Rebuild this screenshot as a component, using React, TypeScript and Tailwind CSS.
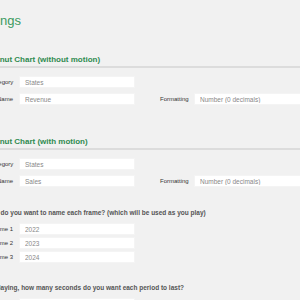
import React from "react";

const font = "font-['Liberation_Sans',Arial,sans-serif]";

function Field({ label, value, wide }: { label: string; value: string; wide?: boolean }) {
  return (
    <div className="flex items-center">
      <span className={`text-right text-[6px] text-[#333] ${wide ? "w-[28px]" : "w-[24px]"} shrink-0 whitespace-nowrap`}>
        {label}
      </span>
      <input
        readOnly
        value={value}
        className="ml-[6px] h-[12px] w-[116px] shrink-0 border border-[#f4f4f4] bg-white px-[5px] text-[6.5px] text-[#888] outline-none"
      />
    </div>
  );
}

function SectionHead({ children }: { children: React.ReactNode }) {
  return (
    <div className="border-b-2 border-[#dcdcdc] pb-[1px] text-[8px] font-bold leading-[10px] text-[#2f8a50] whitespace-nowrap">
      {children}
    </div>
  );
}

function ChartSection({ title, name }: { title: string; name: string }) {
  return (
    <div>
      <SectionHead>{title}</SectionHead>
      <div className="mt-[8px] flex flex-col gap-[5px]">
        <Field label="Category" value="States" />
        <div className="flex items-center">
          <Field label="Name" value={name} />
          <div className="ml-[25px] flex items-center">
            <Field label="Formatting" value="Number (0 decimals)" wide />
          </div>
        </div>
      </div>
    </div>
  );
}

export default function App() {
  return (
    <div className={`h-[300px] w-[300px] overflow-hidden bg-[#f1f1f1] ${font}`}>
      <div className="ml-[-26px] pt-[13px] text-[13px] leading-[15px] text-[#3c9a5f] whitespace-nowrap">Settings</div>
      <div className="ml-[-11px] w-[330px]">
        <div className="mt-[27px]">
          <ChartSection title="Donut Chart (without motion)" name="Revenue" />
        </div>
        <div className="mt-[32px]">
          <ChartSection title="Donut Chart (with motion)" name="Sales" />
        </div>
        <div className="ml-[-4px] mt-[22px] text-[6.5px] font-bold leading-[8px] text-[#555] whitespace-nowrap">
          How do you want to name each frame? (which will be used as you play)
        </div>
        <div className="mt-[6px] flex flex-col gap-[2px]">
          <Field label="Frame 1" value="2022" />
          <Field label="Frame 2" value="2023" />
          <Field label="Frame 3" value="2024" />
        </div>
        <div className="mt-[21px] text-[6.5px] font-bold leading-[8px] text-[#555] whitespace-nowrap">
          If playing, how many seconds do you want each period to last?
        </div>
        <div className="mt-[6px]">
          <Field label="Seconds" value="2" />
        </div>
      </div>
    </div>
  );
}
